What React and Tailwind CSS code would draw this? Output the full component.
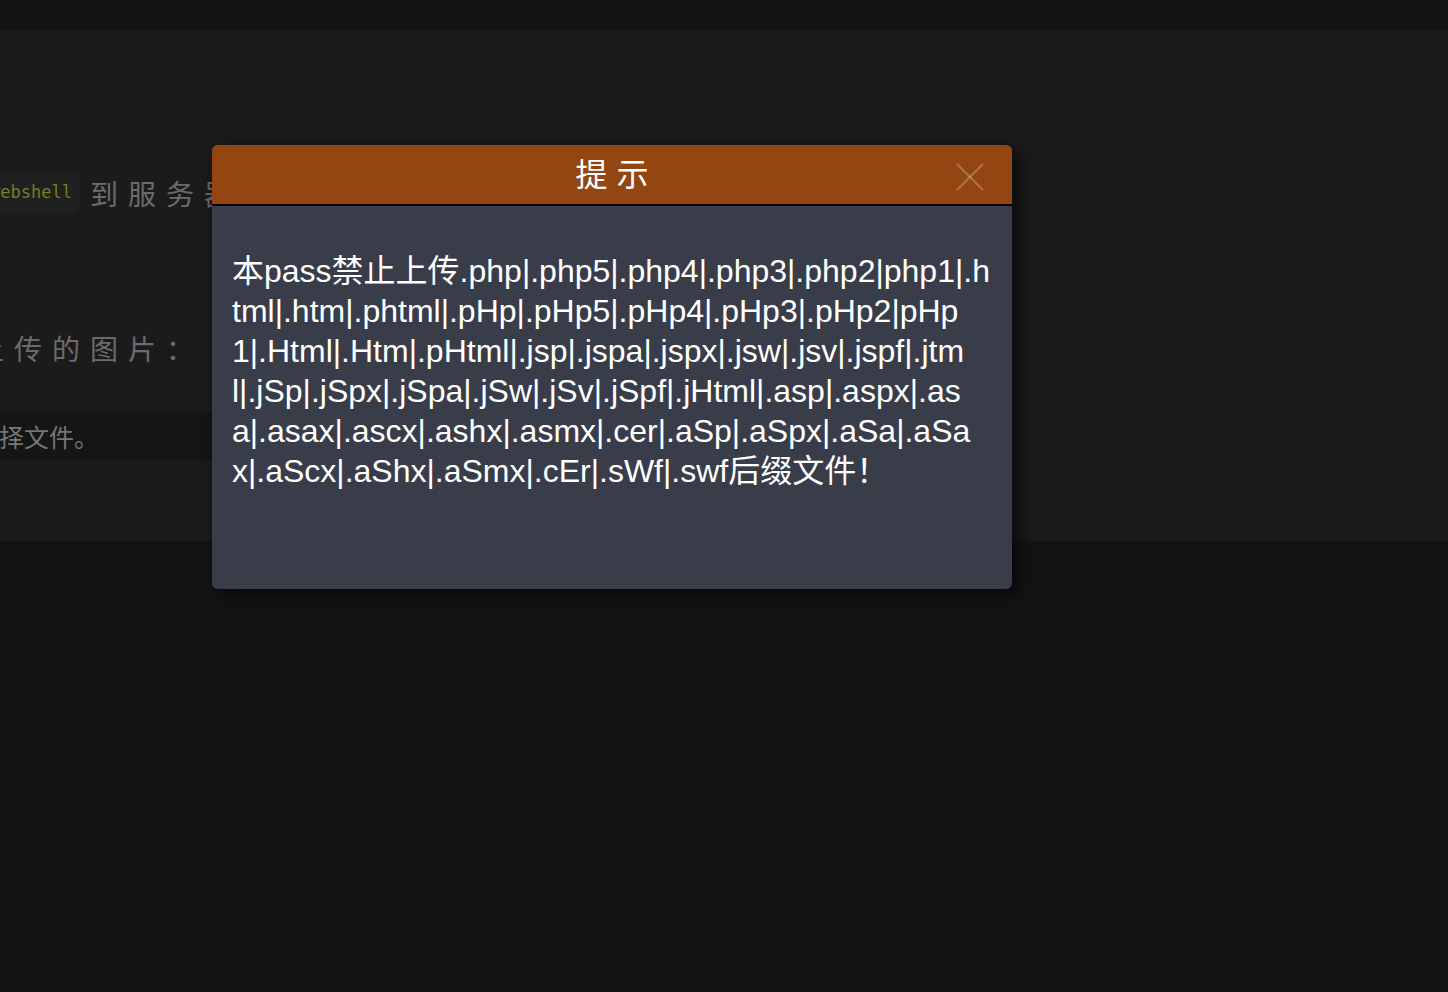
const message = [
  '本pass禁止上传.php|.php5|.php4|.php3|.php2|php1|.h',
  'tml|.htm|.phtml|.pHp|.pHp5|.pHp4|.pHp3|.pHp2|pHp',
  '1|.Html|.Htm|.pHtml|.jsp|.jspa|.jspx|.jsw|.jsv|.jspf|.jtm',
  'l|.jSp|.jSpx|.jSpa|.jSw|.jSv|.jSpf|.jHtml|.asp|.aspx|.as',
  'a|.asax|.ascx|.ashx|.asmx|.cer|.aSp|.aSpx|.aSa|.aSa',
  'x|.aScx|.aShx|.aSmx|.cEr|.sWf|.swf后缀文件！',
];

const CloseIcon = () => (
  <svg width="28" height="28" viewBox="0 0 28 28" fill="none" stroke="currentColor" strokeWidth="2">
    <line x1="1" y1="1" x2="27" y2="27" />
    <line x1="27" y1="1" x2="1" y2="27" />
  </svg>
);

const App = () => {
  return (
    <div className="relative min-h-screen overflow-hidden bg-[#141414] font-['Liberation_Sans','Noto_Sans_CJK_SC',sans-serif]">
      {/* Top bar */}
      <div className="h-[30px] bg-[#141414]" />

      {/* Upload panel (behind the dialog) */}
      <section className="h-[511px] bg-[#1b1b1b] flex flex-col">
        <div className="mt-[143px] flex items-center h-[40px] -ml-[18px]">
          <code className="h-[40px] flex items-center px-2 rounded-lg bg-[#202020] text-[#7c7a22] text-[17px] font-['DejaVu_Sans_Mono',monospace]">
            webshell
          </code>
          <span className="ml-[10px] text-[28px] tracking-[10px] text-[#6b6b6b] whitespace-nowrap font-['Noto_Sans_CJK_SC',sans-serif]">
            到服务器。
          </span>
        </div>

        <p className="mt-[115px] -ml-[24px] h-[40px] leading-[40px] text-[28px] tracking-[10px] text-[#6b6b6b] whitespace-nowrap font-['Noto_Sans_CJK_SC',sans-serif]">
          上传的图片：
        </p>

        <div className="mt-[45px] w-[1000px] h-[47px] bg-[#151515] flex items-center">
          <span className="-ml-[51px] text-[25px] text-[#777777] whitespace-nowrap font-['Noto_Sans_CJK_SC',sans-serif]">
            未选择文件。
          </span>
        </div>
      </section>

      {/* Dialog */}
      <div className="absolute left-[212px] top-[145px] w-[800px] rounded-md overflow-hidden bg-[#393d49] shadow-[6px_6px_18px_rgba(0,0,0,0.7)]">
        <div className="relative h-[61px] bg-[#934611] border-b-2 border-black flex items-center justify-center">
          <h3 className="pl-[9px] pb-[6px] text-[32px] tracking-[9px] text-white font-['Noto_Sans_CJK_SC',sans-serif]">提示</h3>
          <button className="absolute right-[28px] top-[18px] text-white/25">
            <CloseIcon />
          </button>
        </div>
        <div className="h-[383px] px-5 pt-[45px] text-white text-[32px] leading-[40px]">
          {message.map((line) => (
            <div key={line} className="whitespace-nowrap">{line}</div>
          ))}
        </div>
      </div>
    </div>
  );
};

export default App;
